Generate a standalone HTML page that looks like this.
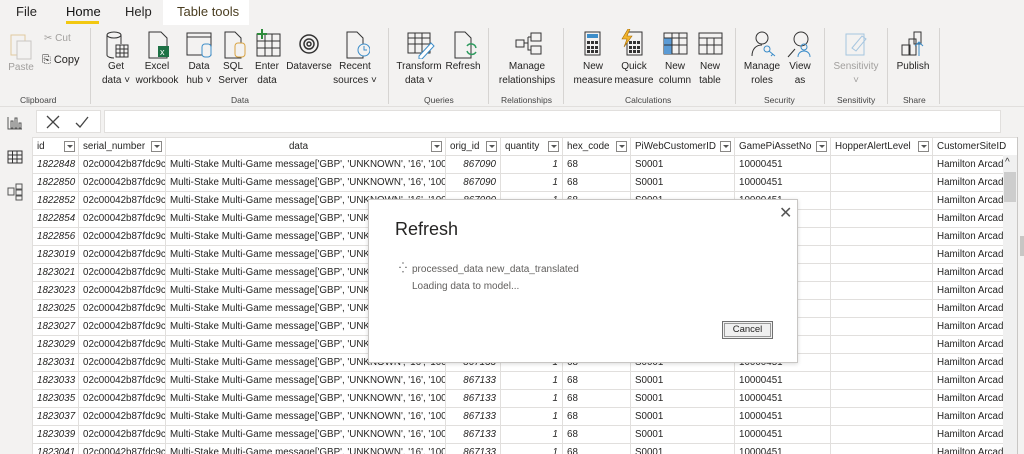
<!DOCTYPE html>
<html><head><meta charset="utf-8">
<style>
*{margin:0;padding:0;box-sizing:border-box}
body{width:1024px;height:454px;overflow:hidden;background:#f3f2f1;font-family:"Liberation Sans",sans-serif;color:#252423;position:relative}
.a{position:absolute}
.tab{position:absolute;top:4px;font-size:13px;color:#252423}
.lbl{position:absolute;font-size:10px;text-align:center;line-height:14px;color:#252423;white-space:nowrap;transform:translateX(-50%)}
.grp{position:absolute;top:95px;font-size:8.5px;color:#444;text-align:center}
.sep{position:absolute;top:28px;width:1px;height:76px;background:#d6d4d2}
svg.i{position:absolute}
table{border-collapse:collapse;table-layout:fixed;font-size:9.8px}
td,th{border:1px solid #e1dfdd;height:18px;white-space:nowrap;overflow:hidden;padding:0 4px;font-weight:normal;text-align:left;color:#252423}
th{background:#fff;position:relative;padding-right:18px}
th span.f{position:absolute;right:3px;top:3px;width:11px;height:11px;border:1px solid #8a8886;background:#fff}
th span.f:after{content:"";position:absolute;left:2px;top:3px;border-left:3px solid transparent;border-right:3px solid transparent;border-top:3px solid #555}
td.i{font-style:italic;text-align:right}
</style></head><body>
<div class="a" style="left:163px;top:0;width:86px;height:25px;background:#fff"></div>
<div class="tab" style="left:16px">File</div>
<div class="tab" style="left:66px;color:#111">Home</div>
<div class="a" style="left:66px;top:21px;width:33px;height:3px;background:#f2c811"></div>
<div class="tab" style="left:125px">Help</div>
<div class="tab" style="left:177px;color:#4a3d20">Table tools</div>

<svg class="i" style="left:8px;top:31px" width="26" height="30"><rect x="3" y="4" width="14" height="20" fill="none" stroke="#e0c9a0"/><rect x="9" y="10" width="14" height="18" fill="#f3f2f1" stroke="#c8c6c4"/></svg>
<div class="lbl" style="left:21px;top:61px;color:#a19f9d">Paste</div>
<div class="lbl" style="left:58px;top:32px;color:#a19f9d;transform:none;left:44px">✂ Cut</div>
<div class="lbl" style="left:42px;top:53px;font-size:11px;transform:none">⎘ Copy</div>
<div class="grp" style="left:20px">Clipboard</div>
<div class="sep" style="left:90px"></div>

<svg class="i" style="left:104px;top:30px" width="26" height="30" fill="none" stroke="#333"><ellipse cx="10" cy="5" rx="7" ry="3"/><path d="M3 5v20c0 2 4 3 7 3M17 5v9"/><rect x="12" y="15" width="12" height="12"/><path d="M12 19h12M12 23h12M16 15v12M20 15v12"/></svg>
<div class="lbl" style="left:116px;top:60px">Get<br>data ˅</div>
<svg class="i" style="left:146px;top:30px" width="26" height="30" fill="none" stroke="#333"><path d="M3 2h12l6 6v20H3z"/><rect x="12" y="16" width="11" height="11" fill="#1e7145" stroke="none"/><text x="14" y="25" font-size="9" fill="#fff" stroke="none" font-family="Liberation Sans">x</text></svg>
<div class="lbl" style="left:157px;top:60px">Excel<br>workbook</div>
<svg class="i" style="left:185px;top:31px" width="30" height="28" fill="none" stroke="#333"><rect x="2" y="2" width="24" height="22"/><path d="M2 6h24"/><rect x="17" y="13" width="9" height="13" rx="3" fill="#f3f2f1" stroke="#3c8dc9"/></svg>
<div class="lbl" style="left:199px;top:60px">Data<br>hub ˅</div>
<svg class="i" style="left:222px;top:30px" width="26" height="30" fill="none" stroke="#333"><path d="M3 2h10l6 6v20H3z"/><rect x="13" y="13" width="10" height="14" rx="3" fill="#f3f2f1" stroke="#d9a341"/></svg>
<div class="lbl" style="left:233px;top:60px">SQL<br>Server</div>
<svg class="i" style="left:254px;top:29px" width="28" height="30" fill="none" stroke="#333"><rect x="3" y="5" width="23" height="22"/><path d="M3 12h23M3 19h23M11 5v22M18 5v22"/><path d="M8 0v10M3 5h10" stroke="#2e8b3b" stroke-width="2"/></svg>
<div class="lbl" style="left:267px;top:60px">Enter<br>data</div>
<svg class="i" style="left:296px;top:33px" width="26" height="22" fill="none" stroke="#333" stroke-width="1.5"><circle cx="13" cy="11" r="9"/><circle cx="13" cy="11" r="5"/><circle cx="13" cy="11" r="2"/></svg>
<div class="lbl" style="left:309px;top:60px">Dataverse</div>
<svg class="i" style="left:344px;top:30px" width="26" height="30" fill="none" stroke="#333"><path d="M3 2h10l6 6v20H3z"/><circle cx="20" cy="20" r="6" fill="#f3f2f1" stroke="#3c8dc9"/><path d="M20 16v4h3" stroke="#3c8dc9"/></svg>
<div class="lbl" style="left:355px;top:60px">Recent<br>sources ˅</div>
<div class="grp" style="left:231px">Data</div>
<div class="sep" style="left:388px"></div>

<svg class="i" style="left:406px;top:31px" width="30" height="28" fill="none" stroke="#333"><rect x="2" y="2" width="22" height="20"/><path d="M2 7h22M2 13h22M9 2v20M16 2v20"/><path d="M13 25l12-13 3 3-12 13h-3z" fill="#fff" stroke="#3c8dc9"/></svg>
<div class="lbl" style="left:419px;top:60px">Transform<br>data ˅</div>
<svg class="i" style="left:452px;top:30px" width="26" height="30" fill="none" stroke="#333"><path d="M3 2h10l6 6v20H3z"/><path d="M15 16a5 5 0 0 1 9 2M24 22a5 5 0 0 1-9-1" stroke="#2e9b5f" stroke-width="1.5"/></svg>
<div class="lbl" style="left:463px;top:60px">Refresh</div>
<div class="grp" style="left:424px">Queries</div>
<div class="sep" style="left:488px"></div>

<svg class="i" style="left:514px;top:31px" width="28" height="26" fill="none" stroke="#333"><rect x="2" y="9" width="8" height="7"/><rect x="17" y="2" width="10" height="8"/><rect x="17" y="15" width="10" height="8"/><path d="M10 12h4M14 6v13h3M14 6h3"/></svg>
<div class="lbl" style="left:527px;top:60px">Manage<br>relationships</div>
<div class="grp" style="left:501px">Relationships</div>
<div class="sep" style="left:563px"></div>

<svg class="i" style="left:583px;top:31px" width="20" height="26"><rect x="2" y="1" width="15" height="23" fill="none" stroke="#333"/><rect x="4" y="3" width="11" height="4" fill="#3c8dc9"/><g fill="#333"><rect x="4" y="10" width="3" height="3"/><rect x="8" y="10" width="3" height="3"/><rect x="12" y="10" width="3" height="3"/><rect x="4" y="15" width="3" height="3"/><rect x="8" y="15" width="3" height="3"/><rect x="12" y="15" width="3" height="3"/><rect x="4" y="19" width="3" height="3"/><rect x="8" y="19" width="3" height="3"/><rect x="12" y="19" width="3" height="3"/></g></svg>
<div class="lbl" style="left:593px;top:60px">New<br>measure</div>
<svg class="i" style="left:620px;top:29px" width="24" height="28"><rect x="7" y="3" width="15" height="23" fill="none" stroke="#333"/><g fill="#333"><rect x="9" y="12" width="3" height="3"/><rect x="13" y="12" width="3" height="3"/><rect x="17" y="12" width="3" height="3"/><rect x="9" y="17" width="3" height="3"/><rect x="13" y="17" width="3" height="3"/><rect x="17" y="17" width="3" height="3"/><rect x="9" y="21" width="3" height="3"/><rect x="13" y="21" width="3" height="3"/><rect x="17" y="21" width="3" height="3"/></g><path d="M8 0L2 10h5l-3 8 8-11H7l3-7z" fill="#f2b52e" stroke="#a56a00" stroke-width=".6"/></svg>
<div class="lbl" style="left:634px;top:60px">Quick<br>measure</div>
<svg class="i" style="left:663px;top:32px" width="26" height="24" fill="none" stroke="#333"><rect x="1" y="1" width="23" height="21"/><rect x="1" y="6" width="8" height="16" fill="#5b9bd5" stroke="none"/><path d="M1 6h23M1 13h23M9 1v21M16 1v21"/></svg>
<div class="lbl" style="left:675px;top:60px">New<br>column</div>
<svg class="i" style="left:698px;top:32px" width="26" height="24" fill="none" stroke="#333"><rect x="1" y="1" width="23" height="21"/><path d="M1 6h23M1 13h23M9 6v16M16 6v16"/></svg>
<div class="lbl" style="left:710px;top:60px">New<br>table</div>
<div class="grp" style="left:625px">Calculations</div>
<div class="sep" style="left:735px"></div>

<svg class="i" style="left:750px;top:30px" width="28" height="28" fill="none" stroke="#333"><circle cx="12" cy="8" r="6"/><path d="M2 26c0-7 4-11 10-11"/><circle cx="17" cy="19" r="3" stroke="#3c8dc9"/><path d="M19 21l6 5M23 24l-2 2" stroke="#3c8dc9"/></svg>
<div class="lbl" style="left:762px;top:60px">Manage<br>roles</div>
<svg class="i" style="left:786px;top:30px" width="28" height="28" fill="none" stroke="#333"><circle cx="15" cy="9" r="7"/><path d="M2 27l7-8"/><circle cx="18" cy="17" r="3" stroke="#3c8dc9"/><path d="M12 27c0-4 3-6 6-6s6 2 6 6" stroke="#3c8dc9"/></svg>
<div class="lbl" style="left:800px;top:60px">View<br>as</div>
<div class="grp" style="left:764px">Security</div>
<div class="sep" style="left:824px"></div>

<svg class="i" style="left:843px;top:30px" width="28" height="28" fill="none" stroke="#a6c6e0"><rect x="3" y="4" width="18" height="21"/><path d="M9 18l10-12 4 3-10 12z"/></svg>
<div class="lbl" style="left:856px;top:60px;color:#a19f9d">Sensitivity<br>˅</div>
<div class="grp" style="left:837px">Sensitivity</div>
<div class="sep" style="left:887px"></div>

<svg class="i" style="left:900px;top:30px" width="28" height="28" fill="none" stroke="#333"><rect x="2" y="15" width="8" height="10"/><rect x="9" y="9" width="7" height="16"/><rect x="14" y="2" width="7" height="12"/><path d="M19 26V12M15 16l4-4 4 4" stroke="#3c8dc9"/></svg>
<div class="lbl" style="left:913px;top:60px">Publish</div>
<div class="grp" style="left:903px">Share</div>
<div class="sep" style="left:939px"></div>

<div class="a" style="left:0;top:106px;width:1024px;height:1px;background:#e1dfdd"></div>

<svg class="i" style="left:7px;top:116px" width="16" height="14" fill="none" stroke="#555"><path d="M1 1v12h14"/><rect x="4" y="5" width="2" height="7"/><rect x="8" y="2" width="2" height="10"/><rect x="12" y="7" width="2" height="5"/></svg>
<svg class="i" style="left:7px;top:150px" width="16" height="14" fill="none" stroke="#333"><rect x="1" y="1" width="14" height="12"/><path d="M1 5h14M1 9h14M5.5 1v12M10 1v12"/></svg>
<svg class="i" style="left:7px;top:183px" width="16" height="18" fill="none" stroke="#555"><rect x="1" y="5" width="6" height="7"/><rect x="9" y="1" width="6" height="5"/><rect x="9" y="7" width="6" height="5"/><rect x="9" y="13" width="6" height="4"/></svg>

<div class="a" style="left:36px;top:110px;width:65px;height:23px;background:#fff;border:1px solid #e1dfdd"></div>
<svg class="i" style="left:44px;top:113px" width="50" height="18" fill="none" stroke="#444" stroke-width="1.3"><path d="M3 3l12 12M15 3L3 15M32 10l4 4 8-10"/></svg>
<div class="a" style="left:104px;top:110px;width:897px;height:23px;background:#fff;border:1px solid #e1dfdd"></div>

<div class="a" style="left:32px;top:137px;width:992px;height:317px;background:#fff;overflow:hidden">
<table style="width:1004px">
<colgroup><col style="width:46px"><col style="width:87px"><col style="width:280px"><col style="width:55px"><col style="width:62px"><col style="width:68px"><col style="width:104px"><col style="width:96px"><col style="width:102px"><col style="width:104px"></colgroup>
<tr><th>id<span class="f"></span></th><th>serial_number<span class="f"></span></th><th style="text-align:center">data<span class="f"></span></th><th>orig_id<span class="f"></span></th><th>quantity<span class="f"></span></th><th>hex_code<span class="f"></span></th><th>PiWebCustomerID<span class="f"></span></th><th>GamePiAssetNo<span class="f"></span></th><th>HopperAlertLevel<span class="f"></span></th><th>CustomerSiteID<span class="f" style="right:-6px"></span></th></tr>
<tr><td class="i">1822848</td><td>02c00042b87fdc9c</td><td>Multi-Stake Multi-Game message['GBP', 'UNKNOWN', '16', '100']</td><td class="i">867090</td><td class="i">1</td><td>68</td><td>S0001</td><td>10000451</td><td></td><td>Hamilton Arcade</td></tr>
<tr><td class="i">1822850</td><td>02c00042b87fdc9c</td><td>Multi-Stake Multi-Game message['GBP', 'UNKNOWN', '16', '100']</td><td class="i">867090</td><td class="i">1</td><td>68</td><td>S0001</td><td>10000451</td><td></td><td>Hamilton Arcade</td></tr>
<tr><td class="i">1822852</td><td>02c00042b87fdc9c</td><td>Multi-Stake Multi-Game message['GBP', 'UNKNOWN', '16', '100']</td><td class="i">867090</td><td class="i">1</td><td>68</td><td>S0001</td><td>10000451</td><td></td><td>Hamilton Arcade</td></tr>
<tr><td class="i">1822854</td><td>02c00042b87fdc9c</td><td>Multi-Stake Multi-Game message['GBP', 'UNKNOWN', '16', '100']</td><td class="i">867090</td><td class="i">1</td><td>68</td><td>S0001</td><td>10000451</td><td></td><td>Hamilton Arcade</td></tr>
<tr><td class="i">1822856</td><td>02c00042b87fdc9c</td><td>Multi-Stake Multi-Game message['GBP', 'UNKNOWN', '16', '100']</td><td class="i">867090</td><td class="i">1</td><td>68</td><td>S0001</td><td>10000451</td><td></td><td>Hamilton Arcade</td></tr>
<tr><td class="i">1823019</td><td>02c00042b87fdc9c</td><td>Multi-Stake Multi-Game message['GBP', 'UNKNOWN', '16', '100']</td><td class="i">867133</td><td class="i">1</td><td>68</td><td>S0001</td><td>10000451</td><td></td><td>Hamilton Arcade</td></tr>
<tr><td class="i">1823021</td><td>02c00042b87fdc9c</td><td>Multi-Stake Multi-Game message['GBP', 'UNKNOWN', '16', '100']</td><td class="i">867133</td><td class="i">1</td><td>68</td><td>S0001</td><td>10000451</td><td></td><td>Hamilton Arcade</td></tr>
<tr><td class="i">1823023</td><td>02c00042b87fdc9c</td><td>Multi-Stake Multi-Game message['GBP', 'UNKNOWN', '16', '100']</td><td class="i">867133</td><td class="i">1</td><td>68</td><td>S0001</td><td>10000451</td><td></td><td>Hamilton Arcade</td></tr>
<tr><td class="i">1823025</td><td>02c00042b87fdc9c</td><td>Multi-Stake Multi-Game message['GBP', 'UNKNOWN', '16', '100']</td><td class="i">867133</td><td class="i">1</td><td>68</td><td>S0001</td><td>10000451</td><td></td><td>Hamilton Arcade</td></tr>
<tr><td class="i">1823027</td><td>02c00042b87fdc9c</td><td>Multi-Stake Multi-Game message['GBP', 'UNKNOWN', '16', '100']</td><td class="i">867133</td><td class="i">1</td><td>68</td><td>S0001</td><td>10000451</td><td></td><td>Hamilton Arcade</td></tr>
<tr><td class="i">1823029</td><td>02c00042b87fdc9c</td><td>Multi-Stake Multi-Game message['GBP', 'UNKNOWN', '16', '100']</td><td class="i">867133</td><td class="i">1</td><td>68</td><td>S0001</td><td>10000451</td><td></td><td>Hamilton Arcade</td></tr>
<tr><td class="i">1823031</td><td>02c00042b87fdc9c</td><td>Multi-Stake Multi-Game message['GBP', 'UNKNOWN', '16', '100']</td><td class="i">867133</td><td class="i">1</td><td>68</td><td>S0001</td><td>10000451</td><td></td><td>Hamilton Arcade</td></tr>
<tr><td class="i">1823033</td><td>02c00042b87fdc9c</td><td>Multi-Stake Multi-Game message['GBP', 'UNKNOWN', '16', '100']</td><td class="i">867133</td><td class="i">1</td><td>68</td><td>S0001</td><td>10000451</td><td></td><td>Hamilton Arcade</td></tr>
<tr><td class="i">1823035</td><td>02c00042b87fdc9c</td><td>Multi-Stake Multi-Game message['GBP', 'UNKNOWN', '16', '100']</td><td class="i">867133</td><td class="i">1</td><td>68</td><td>S0001</td><td>10000451</td><td></td><td>Hamilton Arcade</td></tr>
<tr><td class="i">1823037</td><td>02c00042b87fdc9c</td><td>Multi-Stake Multi-Game message['GBP', 'UNKNOWN', '16', '100']</td><td class="i">867133</td><td class="i">1</td><td>68</td><td>S0001</td><td>10000451</td><td></td><td>Hamilton Arcade</td></tr>
<tr><td class="i">1823039</td><td>02c00042b87fdc9c</td><td>Multi-Stake Multi-Game message['GBP', 'UNKNOWN', '16', '100']</td><td class="i">867133</td><td class="i">1</td><td>68</td><td>S0001</td><td>10000451</td><td></td><td>Hamilton Arcade</td></tr>
<tr><td class="i">1823041</td><td>02c00042b87fdc9c</td><td>Multi-Stake Multi-Game message['GBP', 'UNKNOWN', '16', '100']</td><td class="i">867133</td><td class="i">1</td><td>68</td><td>S0001</td><td>10000451</td><td></td><td>Hamilton Arcade</td></tr>
</table>
</div>
<div class="a" style="left:1003px;top:155px;width:14px;height:299px;background:#f0f0f0"></div>
<div class="a" style="left:1005px;top:157px;font-size:10px;color:#333">^</div>
<div class="a" style="left:1004px;top:172px;width:12px;height:30px;background:#cdcdcd"></div>
<div class="a" style="left:1017px;top:137px;width:7px;height:317px;background:#f3f2f1;border-left:1px solid #c8c6c4"></div>
<div class="a" style="left:1020px;top:236px;width:4px;height:20px;background:#c8c6c4"></div>

<div class="a" style="left:368px;top:199px;width:430px;height:164px;background:#fff;border:1px solid #c8c6c4;box-shadow:0 1px 4px rgba(0,0,0,.15)">
  <div class="a" style="left:26px;top:19px;font-size:18px;color:#252423">Refresh</div>
  <div class="a" style="left:410px;top:3px;font-size:16px;color:#555">✕</div>
  <div class="a" style="left:30px;top:63px;font-size:10px;color:#333">⁛</div>
  <div class="a" style="left:43px;top:64px;font-size:10px;color:#605e5c">processed_data new_data_translated</div>
  <div class="a" style="left:43px;top:81px;font-size:10px;color:#605e5c">Loading data to model...</div>
  <div class="a" style="left:353px;top:121px;width:51px;height:18px;border:1px solid #707070;background:#f0f0f0;font-size:9.5px;text-align:center;line-height:16px;outline:1px solid #999;outline-offset:-3px">Cancel</div>
</div>
</body></html>
